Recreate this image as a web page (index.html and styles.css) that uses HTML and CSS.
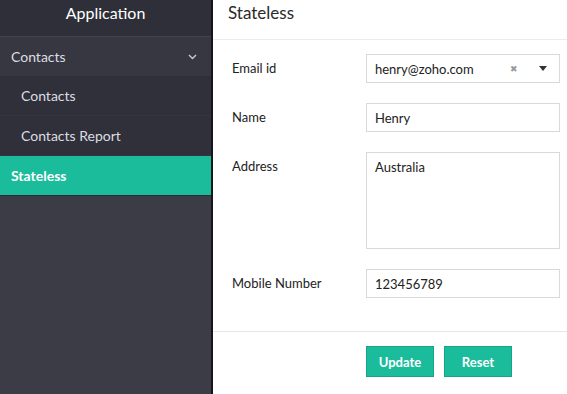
FILE: index.html
```html
<!DOCTYPE html>
<html>
<head>
<meta charset="utf-8">
<link rel="stylesheet" href="styles.css">
</head>
<body>
<div class="app">
  <aside class="sidebar">
    <div class="brand">Application</div>
    <div class="menu-group">
      <span>Contacts</span>
      <svg class="chev" width="9" height="6" viewBox="0 0 9 6"><path d="M1 1 L4.5 4.5 L8 1" fill="none" stroke="#c9cad2" stroke-width="1.4"/></svg>
    </div>
    <div class="menu-sub">Contacts</div>
    <div class="menu-sub">Contacts Report</div>
    <div class="menu-item active">Stateless</div>
  </aside>
  <main class="content">
    <header class="title">Stateless</header>
    <form class="form">
      <div class="row">
        <label>Email id</label>
        <div class="field select">
          <span class="val">henry@zoho.com</span>
          <span class="clear">&#x2716;</span>
          <svg class="caret" width="8" height="5" viewBox="0 0 8 5"><path d="M0 0 H8 L4 5 Z" fill="#333"/></svg>
        </div>
      </div>
      <div class="row">
        <label>Name</label>
        <div class="field">Henry</div>
      </div>
      <div class="row">
        <label>Address</label>
        <div class="field area">Australia</div>
      </div>
      <div class="row">
        <label>Mobile Number</label>
        <div class="field">123456789</div>
      </div>
    </form>
    <footer class="actions">
      <button class="btn" type="button">Update</button>
      <button class="btn" type="button">Reset</button>
    </footer>
  </main>
</div>
</body>
</html>
```
FILE: styles.css
```css
html, body {
  margin: 0;
  padding: 0;
  height: 100%;
}
body {
  font-family: Lato, "Liberation Sans", sans-serif;
  background: #ffffff;
  overflow: hidden;
}
.app {
  display: flex;
  height: 394px;
}
.sidebar {
  width: 211px;
  flex: none;
  background: #3c3c47;
  border-right: 2px solid #15151a;
  display: flex;
  flex-direction: column;
}
.brand {
  height: 37px;
  box-sizing: border-box;
  background: #2e2f38;
  color: #ffffff;
  font-size: 16px;
  text-align: center;
  padding-top: 3px;
  border-bottom: 1px solid #42434d;
}
.menu-group {
  height: 39px;
  box-sizing: border-box;
  background: #363741;
  color: #dcdde3;
  font-size: 14px;
  display: flex;
  align-items: center;
  justify-content: space-between;
  padding: 0 14px 0 11px;
}
.menu-sub {
  height: 40px;
  box-sizing: border-box;
  background: #2f3039;
  color: #dcdde3;
  font-size: 14px;
  display: flex;
  align-items: center;
  padding-left: 21px;
  border-bottom: 1px solid #34353e;
}
.menu-item {
  height: 40px;
  box-sizing: border-box;
  display: flex;
  align-items: center;
  padding-left: 11px;
  font-size: 14px;
  font-weight: bold;
  color: #ffffff;
}
.menu-item.active {
  background: #1abc9c;
  border-bottom: 1px solid #2a2b33;
}
.content {
  flex: 1;
  display: flex;
  flex-direction: column;
}
.title {
  height: 40px;
  box-sizing: border-box;
  border-bottom: 1px solid #ececec;
  font-size: 17px;
  color: #2a2a2a;
  padding: 2px 0 0 15px;
}
.form {
  padding: 14px 7px 0 19px;
  display: flex;
  flex-direction: column;
  gap: 20px;
  height: 292px;
  box-sizing: border-box;
  border-bottom: 1px solid #e6e6e6;
}
.row {
  display: flex;
  align-items: flex-start;
}
.row label {
  width: 134px;
  flex: none;
  font-size: 13px;
  color: #222;
  padding-top: 6px;
}
.field {
  flex: 1;
  height: 29px;
  box-sizing: border-box;
  border: 1px solid #d9d9d9;
  font-size: 13px;
  color: #222;
  padding: 6px 8px;
  display: flex;
  align-items: center;
}
.select .val {
  flex: 1;
}
.select .clear {
  font-size: 9px;
  color: #999;
  margin-right: 21px;
}
.select .caret {
  margin-right: 4px;
}
.area {
  height: 97px;
  align-items: flex-start;
  padding-top: 6px;
}
.actions {
  display: flex;
  gap: 10px;
  padding: 14px 0 0 153px;
}
.btn {
  width: 68px;
  height: 31px;
  background: #1abc9c;
  border: 1px solid #16a589;
  color: #ffffff;
  font-family: Lato, "Liberation Sans", sans-serif;
  font-weight: bold;
  font-size: 13px;
  padding: 0;
}
```
